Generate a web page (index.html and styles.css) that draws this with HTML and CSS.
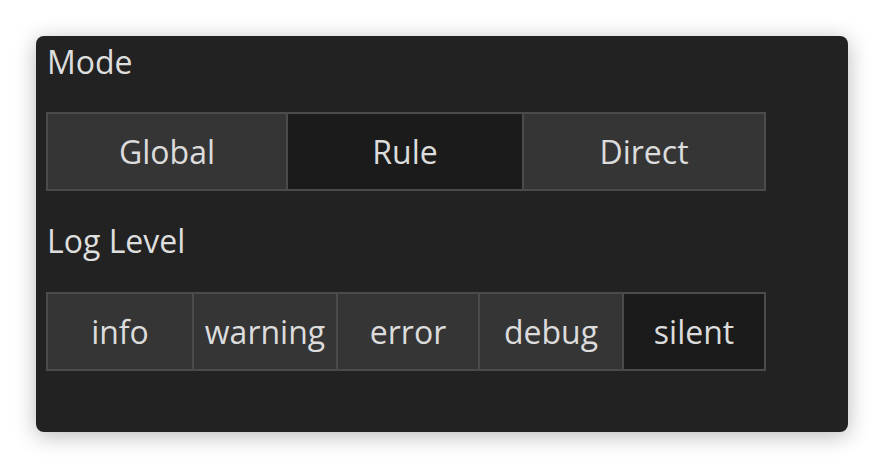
FILE: index.html
```html
<!DOCTYPE html>
<html>
<head>
<meta charset="utf-8">
<link rel="stylesheet" href="styles.css">
</head>
<body>
<div class="card">
  <div class="label">Mode</div>
  <div class="seg seg-mode">
    <div class="btn">Global</div>
    <div class="btn active">Rule</div>
    <div class="btn">Direct</div>
  </div>
  <div class="label label-log">Log Level</div>
  <div class="seg seg-log">
    <div class="btn">info</div>
    <div class="btn">warning</div>
    <div class="btn">error</div>
    <div class="btn">debug</div>
    <div class="btn active">silent</div>
  </div>
</div>
</body>
</html>
```

FILE: styles.css
```css
html, body {
  margin: 0;
  padding: 0;
  background: #ffffff;
}
body {
  padding: 36px;
  font-family: "Open Sans", "Noto Sans", sans-serif;
}
.card {
  box-sizing: border-box;
  width: 812px;
  height: 396px;
  background: #222222;
  border-radius: 8px;
  box-shadow: 0 4px 22px rgba(0, 0, 0, 0.28);
  padding: 6px 10px 0 10px;
}
.label {
  font-size: 32px;
  line-height: 40px;
  height: 40px;
  color: #dedede;
  padding-left: 1px;
  margin-bottom: 30px;
}
.label-log {
  margin-top: 30px;
  margin-bottom: 31px;
}
.seg {
  display: grid;
  width: 720px;
  box-sizing: border-box;
  padding: 2px;
  gap: 2px;
  background: #4b4b4b;
  height: 79px;
}
.seg-mode {
  grid-template-columns: 238px 234px 240px;
}
.seg-log {
  grid-template-columns: 144px 142px 140px 142px 140px;
}
.btn {
  display: flex;
  align-items: center;
  justify-content: center;
  background: #353535;
  color: #dcdcdc;
  font-size: 32px;
}
.btn.active {
  background: #1b1b1b;
}
```
